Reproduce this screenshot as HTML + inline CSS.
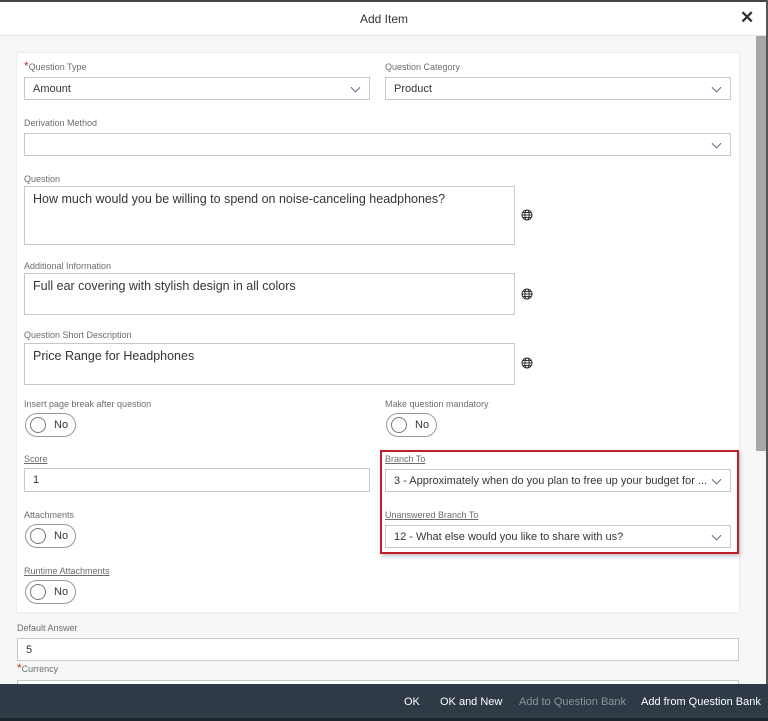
<!DOCTYPE html>
<html><head><style>
*{box-sizing:border-box;margin:0;padding:0}
body{width:768px;height:721px;overflow:hidden;background:#f7f7f7;font-family:"Liberation Sans",sans-serif;position:relative;color:#32363a}
.a{position:absolute}
.hdr{left:0;top:0;width:768px;height:36px;background:#fff;border-top:2px solid #444;border-bottom:1px solid #e5e5e5}
.card{left:17px;top:53px;width:722px;height:559px;background:#fff;box-shadow:0 0 2px rgba(0,0,0,.15)}
.lbl{font-size:9px;color:#6a6d70;white-space:nowrap;line-height:11px}
.u{text-decoration:underline}
.inp{background:#fff;border:1px solid #c8c8c8;font-size:11px;color:#32363a;padding-left:8px;display:flex;align-items:center;white-space:nowrap;overflow:hidden}
.ta{background:#fff;border:1px solid #c8c8c8;font-size:12.5px;color:#32363a;padding:5px 8px}
.chev{position:absolute;right:10px;top:50%;width:7px;height:7px;border-right:1px solid #5a6e85;border-bottom:1px solid #5a6e85;transform:translateY(-70%) rotate(45deg)}
.tg{width:51px;height:24px;border:1px solid #999;border-radius:12px;background:#fff;font-size:11px;color:#32363a}
.tg i{position:absolute;left:4px;top:3px;width:16px;height:16px;border:1px solid #777;border-radius:50%}
.tg span{position:absolute;left:28px;top:5px}
.req{color:#c0392b;font-size:12px;line-height:9px;vertical-align:top}
.ft{left:0;top:684px;width:768px;height:37px;background:#2e3a46;border-bottom:3px solid #1b232b}
.ft span{position:absolute;top:12px;font-size:11px;color:#fff}
</style></head><body>
<div class="a hdr"><div class="a" style="left:0;width:768px;top:10px;text-align:center;font-size:12px;color:#32363a">Add Item</div>
<div class="a" style="left:740px;top:6px;font-size:17px;font-weight:bold;color:#333">✕</div></div>
<div class="a" style="left:756px;top:36px;width:10px;height:415px;background:#a8a8a8"></div>
<div class="a" style="left:766px;top:0;width:2px;height:721px;background:#555"></div>
<div class="a card"></div>

<div class="a lbl" style="left:24px;top:62px"><span class="req">*</span>Question Type</div>
<div class="a inp" style="left:24px;top:77px;width:346px;height:23px">Amount<i class="chev"></i></div>
<div class="a lbl" style="left:385px;top:62px">Question Category</div>
<div class="a inp" style="left:385px;top:77px;width:346px;height:23px">Product<i class="chev"></i></div>
<div class="a lbl" style="left:24px;top:118px">Derivation Method</div>
<div class="a inp" style="left:24px;top:133px;width:707px;height:23px"><i class="chev"></i></div>

<div class="a lbl" style="left:24px;top:174px">Question</div>
<div class="a ta" style="left:24px;top:186px;width:491px;height:59px">How much would you be willing to spend on noise-canceling headphones?</div>
<div class="a lbl" style="left:24px;top:261px">Additional Information</div>
<div class="a ta" style="left:24px;top:273px;width:491px;height:42px">Full ear covering with stylish design in all colors</div>
<div class="a lbl" style="left:24px;top:330px">Question Short Description</div>
<div class="a ta" style="left:24px;top:343px;width:491px;height:42px">Price Range for Headphones</div>

<svg class="a" style="left:521px;top:209px" width="12" height="12" viewBox="0 0 12 12"><g fill="none" stroke="#333" stroke-width="1"><circle cx="6" cy="6" r="5"/><ellipse cx="6" cy="6" rx="2.2" ry="5"/><path d="M1 6h10M2 3.5h8M2 8.5h8"/></g></svg>
<svg class="a" style="left:521px;top:288px" width="12" height="12" viewBox="0 0 12 12"><g fill="none" stroke="#333" stroke-width="1"><circle cx="6" cy="6" r="5"/><ellipse cx="6" cy="6" rx="2.2" ry="5"/><path d="M1 6h10M2 3.5h8M2 8.5h8"/></g></svg>
<svg class="a" style="left:521px;top:357px" width="12" height="12" viewBox="0 0 12 12"><g fill="none" stroke="#333" stroke-width="1"><circle cx="6" cy="6" r="5"/><ellipse cx="6" cy="6" rx="2.2" ry="5"/><path d="M1 6h10M2 3.5h8M2 8.5h8"/></g></svg>

<div class="a lbl" style="left:24px;top:399px">Insert page break after question</div>
<div class="a tg" style="left:25px;top:413px"><i></i><span>No</span></div>
<div class="a lbl" style="left:385px;top:399px">Make question mandatory</div>
<div class="a tg" style="left:386px;top:413px"><i></i><span>No</span></div>

<div class="a lbl u" style="left:24px;top:454px">Score</div>
<div class="a inp" style="left:24px;top:468px;width:346px;height:24px">1</div>

<div class="a" style="left:380px;top:450px;width:359px;height:104px;border:2px solid #c0202a;box-shadow:1px 2px 4px rgba(0,0,0,.25)"></div>
<div class="a lbl u" style="left:385px;top:454px">Branch To</div>
<div class="a inp" style="left:385px;top:469px;width:346px;height:23px">3 - Approximately when do you plan to free up your budget for ...<i class="chev"></i></div>
<div class="a lbl u" style="left:385px;top:510px">Unanswered Branch To</div>
<div class="a inp" style="left:385px;top:525px;width:346px;height:23px">12 - What else would you like to share with us?<i class="chev"></i></div>

<div class="a lbl" style="left:24px;top:510px">Attachments</div>
<div class="a tg" style="left:25px;top:524px"><i></i><span>No</span></div>
<div class="a lbl u" style="left:24px;top:566px">Runtime Attachments</div>
<div class="a tg" style="left:25px;top:580px"><i></i><span>No</span></div>

<div class="a lbl" style="left:17px;top:623px">Default Answer</div>
<div class="a inp" style="left:17px;top:638px;width:722px;height:23px">5</div>
<div class="a lbl" style="left:17px;top:664px"><span class="req">*</span>Currency</div>
<div class="a" style="left:17px;top:680px;width:722px;height:10px;background:#fff;border:1px solid #c8c8c8"></div>

<div class="a ft"><span style="left:404px">OK</span><span style="left:440px">OK and New</span><span style="left:519px;color:#8a949e">Add to Question Bank</span><span style="left:641px">Add from Question Bank</span></div>
</body></html>
